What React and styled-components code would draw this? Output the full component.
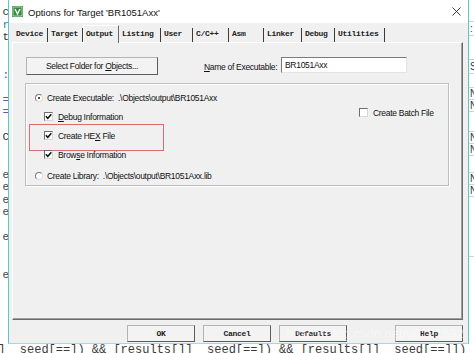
import styled, { createGlobalStyle } from "styled-components";

const ui = `"Liberation Sans", Arial, sans-serif`;
const sys = `"Liberation Mono", "DejaVu Sans Mono", monospace`;

const tabs = [
    { label: "Device", w: 35 },
    { label: "Target", w: 35 },
    { label: "Output", w: 36, active: true },
    { label: "Listing", w: 42 },
    { label: "User", w: 32 },
    { label: "C/C++", w: 36 },
    { label: "Asm", w: 35 },
    { label: "Linker", w: 38 },
    { label: "Debug", w: 33 },
    { label: "Utilities", w: 50 },
];

const leftLines = [
    { t: "c", c: "#333" }, { t: "r", c: "#2a8a8a" }, { t: "t", c: "#333" }, { t: "", c: "#333" },
    { t: "", c: "#333" }, { t: ":", c: "#3355aa" }, { t: "", c: "#333" }, { t: "=", c: "#6655aa" },
    { t: "=", c: "#6655aa" }, { t: "", c: "#333" }, { t: "C", c: "#333" }, { t: "", c: "#333" },
    { t: "", c: "#333" }, { t: "e", c: "#444" }, { t: "e", c: "#444" }, { t: "e", c: "#444" },
    { t: "e", c: "#444" }, { t: "", c: "#333" }, { t: "e", c: "#444" }, { t: "", c: "#333" },
    { t: "", c: "#333" }, { t: "e", c: "#444" }, { t: "", c: "#333" }, { t: "", c: "#333" },
    { t: "", c: "#333" }, { t: "", c: "#333" }, { t: "", c: "#333" },
];

const rightRows = [
    { h: 22, t: "" }, { h: 14, t: ":" }, { h: 24, t: "" }, { h: 14, t: "Se" },
    { h: 14, t: "" }, { h: 12, t: "N" }, { h: 12, t: "N" }, { h: 20, t: "" },
    { h: 12, t: "N" }, { h: 12, t: "N" }, { h: 17, t: "" }, { h: 12, t: "N" },
    { h: 12, t: "N" }, { h: 60, t: "" },
];

function Check() {
    return (
        <svg width="7" height="7" viewBox="0 0 7 7">
            <path d="M0.8 3.2 L2.8 5.3 L6.3 1.2" stroke="#111" strokeWidth="1.5" fill="none" />
        </svg>
    );
}

export default function App() {
    return (
        <Page>
            <GlobalStyle />
            <Top>
                <LeftStrip>
                    {leftLines.map((l, i) => (
                        <Fragment key={i} color={l.c}>{l.t}</Fragment>
                    ))}
                </LeftStrip>
                <Dialog>
                    <TitleBar>
                        <AppIcon>
                            <svg width="11" height="11" viewBox="0 0 11 11">
                                <rect x="0" y="0" width="11" height="11" fill="#2f8a3c" />
                                <rect x="1" y="1" width="9" height="9" fill="none" stroke="#cfe8cf" strokeWidth="0.8" />
                                <path d="M3 3 L5.5 8 L8 3" stroke="#fff" strokeWidth="1.4" fill="none" />
                            </svg>
                        </AppIcon>
                        <Title>Options for Target 'BR1051Axx'</Title>
                        <Close>
                            <svg width="9" height="9" viewBox="0 0 9 9">
                                <path d="M0.5 0.5 L8.5 8.5 M8.5 0.5 L0.5 8.5" stroke="#222" strokeWidth="0.9" />
                            </svg>
                        </Close>
                    </TitleBar>
                    <Body>
                        <TabStrip>
                            {tabs.map((t) => (
                                <Tab key={t.label} $w={t.w} $active={t.active}>{t.label}</Tab>
                            ))}
                        </TabStrip>
                        <Panel>
                            <TopRow>
                                <PushButton>
                                    <Text>Select Folder for <u>O</u>bjects...</Text>
                                </PushButton>
                                <Label><u>N</u>ame of Executable:</Label>
                                <TextInput>BR1051Axx</TextInput>
                            </TopRow>
                            <GroupBox>
                                <OptionRow>
                                    <Radio $checked />
                                    <Text>{"Create Executable:  .\\Objects\\output\\BR1051Axx"}</Text>
                                </OptionRow>
                                <SubOptions>
                                    <Column>
                                        <CheckRow>
                                            <Box><Check /></Box>
                                            <Text><u>D</u>ebug Information</Text>
                                        </CheckRow>
                                        <CheckRow $marked>
                                            <Box><Check /></Box>
                                            <Text>Create HE<u>X</u> File</Text>
                                        </CheckRow>
                                        <CheckRow>
                                            <Box><Check /></Box>
                                            <Text>Brow<u>s</u>e Information</Text>
                                        </CheckRow>
                                    </Column>
                                    <Column $raised>
                                        <CheckRow>
                                            <Box />
                                            <Text>Create Batch File</Text>
                                        </CheckRow>
                                    </Column>
                                </SubOptions>
                                <OptionRow $spaced>
                                    <Radio />
                                    <Text>{"Create Library:  .\\Objects\\output\\BR1051Axx.lib"}</Text>
                                </OptionRow>
                            </GroupBox>
                        </Panel>
                        <ButtonRow>
                            <DialogButton>OK</DialogButton>
                            <DialogButton>Cancel</DialogButton>
                            <DialogButton>Defaults</DialogButton>
                            <DialogButton $apart>Help</DialogButton>
                        </ButtonRow>
                    </Body>
                    <Watermark>https://blog.csdn.net/u0121682</Watermark>
                </Dialog>
                <RightStrip>
                    {rightRows.map((r, i) => (
                        <Cell key={i} $h={r.h}>{r.t}</Cell>
                    ))}
                </RightStrip>
            </Top>
            <CodeLine>{"]]  seed[==]) && [results[]]  seed[==]) && [results[]]  seed[==]])"}</CodeLine>
        </Page>
    );
}

const GlobalStyle = createGlobalStyle`
    html, body {
        margin: 0;
        padding: 0;
        background: #ffffff;
        overflow: hidden;
    }
    * {
        box-sizing: border-box;
    }
`;

const Page = styled.div`
    width: 474px;
    height: 353px;
    overflow: hidden;
    display: flex;
    flex-direction: column;
    background: #ffffff;
`;

const Top = styled.div`
    display: flex;
    height: 344px;
    flex-shrink: 0;
`;

const LeftStrip = styled.div`
    width: 8px;
    overflow: hidden;
    display: flex;
    flex-direction: column;
    align-items: flex-end;
    padding-top: 6px;
    background: #fff;
`;

const Fragment = styled.div`
    height: 12.6px;
    font-family: ${sys};
    font-size: 11px;
    line-height: 12px;
    color: ${(p) => p.color};
    margin-right: -1px;
`;

const Dialog = styled.div`
    position: relative;
    width: 461px;
    display: flex;
    flex-direction: column;
    border-left: 1px solid #5cc6cf;
    border-right: 1px solid #5cc6cf;
    border-bottom: 1px solid #9adde2;
    background: #f0f0f0;
`;

const TitleBar = styled.div`
    height: 23px;
    display: flex;
    align-items: center;
    padding-left: 3px;
    gap: 5px;
    background: #ffffff;
`;

const AppIcon = styled.div`
    width: 11px;
    height: 11px;
    display: flex;
`;

const Title = styled.div`
    font-family: ${ui};
    font-size: 9.5px;
    color: #111;
    margin-top: 1px;
`;

const Close = styled.div`
    margin-left: auto;
    margin-right: 7px;
    display: flex;
`;

const Body = styled.div`
    flex: 1;
    display: flex;
    flex-direction: column;
    padding: 0 5px 0 3px;
`;

const TabStrip = styled.div`
    height: 19px;
    display: flex;
    align-items: flex-end;
    padding-left: 1px;
`;

const Tab = styled.div`
    position: relative;
    width: ${(p) => p.$w}px;
    height: ${(p) => (p.$active ? 18 : 14)}px;
    padding: ${(p) => (p.$active ? "2px 0 0 2px" : "0 0 0 3px")};
    margin-bottom: ${(p) => (p.$active ? -1 : 0)}px;
    z-index: ${(p) => (p.$active ? 1 : 0)};
    font-family: ${sys};
    font-size: 8px;
    font-weight: 700;
    letter-spacing: -0.3px;
    line-height: 12px;
    color: #222;
    background: #f0f0f0;
    border-right: 1px solid ${(p) => (p.$active ? "#6a6a6a" : "#3a3a3a")};
    border-top: ${(p) => (p.$active ? "1px solid #ffffff" : "none")};
    border-left: ${(p) => (p.$active ? "1px solid #ffffff" : "none")};
`;

const Panel = styled.div`
    height: 278px;
    border-top: 1px solid #ffffff;
    border-left: 1px solid #ffffff;
    border-right: 1px solid #6a6a6a;
    border-bottom: 1px solid #6a6a6a;
    box-shadow: inset -1px -1px 0 #a0a0a0;
    padding: 14px 0 0 13px;
`;

const TopRow = styled.div`
    display: flex;
    align-items: center;
    height: 18px;
`;

const PushButton = styled.div`
    width: 132px;
    height: 18px;
    display: flex;
    align-items: center;
    justify-content: center;
    background: #f3f3f3;
    border: 1px solid;
    border-color: #b4b4b4 #5c5c5c #5c5c5c #b4b4b4;
`;

const Label = styled.div`
    margin-left: 46px;
    width: 77px;
    font-family: ${ui};
    font-size: 8.5px;
    letter-spacing: -0.3px;
    white-space: nowrap;
    color: #111;
    margin-top: 2px;
`;

const TextInput = styled.div`
    width: 126px;
    height: 16px;
    padding: 1px 0 0 3px;
    font-family: ${ui};
    font-size: 8.5px;
    letter-spacing: -0.3px;
    line-height: 13px;
    color: #111;
    background: #ffffff;
    border: 1px solid;
    border-color: #7a7a7a #e4e4e4 #e4e4e4 #7a7a7a;
    margin-top: -2px;
`;

const GroupBox = styled.div`
    margin: 8px 0 0 -1px;
    width: 424px;
    height: 103px;
    border: 1px solid #bdbdbd;
    box-shadow: inset 1px 1px 0 #ffffff, 1px 1px 0 #ffffff;
    padding: 4px 0 0 9px;
`;

const OptionRow = styled.div`
    height: 19px;
    display: flex;
    align-items: center;
    gap: 4px;
    margin-top: ${(p) => (p.$spaced ? 2 : 0)}px;
`;

const Radio = styled.span`
    width: 8px;
    height: 8px;
    border-radius: 50%;
    border: 1px solid;
    border-color: #7a7a7a #dcdcdc #dcdcdc #7a7a7a;
    background: #ffffff;
    display: flex;
    align-items: center;
    justify-content: center;

    &::after {
        content: "";
        width: 2px;
        height: 2px;
        border-radius: 50%;
        background: ${(p) => (p.$checked ? "#111" : "transparent")};
    }
`;

const Text = styled.span`
    font-family: ${ui};
    font-size: 8.5px;
    letter-spacing: -0.3px;
    color: #111;
    white-space: pre;
`;

const SubOptions = styled.div`
    display: grid;
    grid-template-columns: 324px auto;
`;

const Column = styled.div`
    display: flex;
    flex-direction: column;
    padding-left: ${(p) => (p.$raised ? 0 : 9)}px;
    margin-top: ${(p) => (p.$raised ? -4 : 0)}px;
`;

const CheckRow = styled.div`
    position: relative;
    height: 19px;
    display: flex;
    align-items: center;
    gap: 5px;

    &::after {
        content: "";
        display: ${(p) => (p.$marked ? "block" : "none")};
        position: absolute;
        top: -2px;
        bottom: -6px;
        left: -15px;
        width: 133px;
        border: 1px solid #dc6a6e;
    }
`;

const Box = styled.span`
    width: 9px;
    height: 9px;
    display: flex;
    align-items: center;
    justify-content: center;
    background: #ffffff;
    border: 1px solid;
    border-color: #6e6e6e #d8d8d8 #d8d8d8 #6e6e6e;
`;

const ButtonRow = styled.div`
    height: 17px;
    margin-top: 5px;
    display: flex;
    gap: 8px;
    padding-left: 115px;
`;

const DialogButton = styled.div`
    width: 68px;
    height: 17px;
    margin-left: ${(p) => (p.$apart ? 40 : 0)}px;
    display: flex;
    align-items: center;
    justify-content: center;
    font-family: ${sys};
    font-size: 8px;
    font-weight: 700;
    letter-spacing: -0.3px;
    color: #222;
    background: #f3f3f3;
    border: 1px solid;
    border-color: #b4b4b4 #5c5c5c #5c5c5c #b4b4b4;
`;

const Watermark = styled.div`
    position: absolute;
    right: 4px;
    bottom: 2px;
    font-family: ${ui};
    font-size: 13px;
    color: rgba(255, 255, 255, 0.45);
    pointer-events: none;
`;

const RightStrip = styled.div`
    width: 5px;
    overflow: hidden;
    display: flex;
    flex-direction: column;
    background: #fff;
`;

const Cell = styled.div`
    height: ${(p) => p.$h}px;
    font-family: ${ui};
    font-size: 10px;
    line-height: ${(p) => p.$h}px;
    color: #333;
    padding-left: 1px;
    border-bottom: 1px solid #d0d0d0;
`;

const CodeLine = styled.div`
    margin-left: -9px;
    margin-top: -1px;
    font-family: ${sys};
    font-size: 12px;
    line-height: 14px;
    color: #3a3a3a;
    white-space: pre;
`;
